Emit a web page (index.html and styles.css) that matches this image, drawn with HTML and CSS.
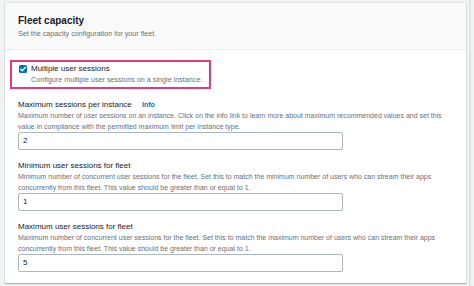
FILE: index.html
```html
<!DOCTYPE html>
<html lang="en">
<head>
<meta charset="utf-8">
<title>Fleet capacity</title>
<link rel="stylesheet" href="styles.css">
</head>
<body>
<div class="page">
  <section class="card">
    <header class="card-header">
      <h2 class="title">Fleet capacity</h2>
      <p class="subtitle">Set the capacity configuration for your fleet.</p>
    </header>
    <div class="card-body">
      <div class="highlight">
        <label class="check-row">
          <span class="checkbox">
            <svg viewBox="0 0 8 8" width="8" height="8"><path d="M1.6 4.1 L3.3 5.8 L6.4 2.3" fill="none" stroke="#fff" stroke-width="1.3" stroke-linecap="round" stroke-linejoin="round"/></svg>
          </span>
          <span class="check-label">Multiple user sessions</span>
        </label>
        <p class="check-desc">Configure multiple user sessions on a single instance.</p>
      </div>

      <div class="field">
        <div class="label">Maximum sessions per instance <span class="info">Info</span></div>
        <p class="desc">Maximum number of user sessions on an instance. Click on the info link to learn more about maximum recommended values and set this value in compliance with the permitted maximum limit per instance type.</p>
        <div class="input">2</div>
      </div>

      <div class="field">
        <div class="label">Minimum user sessions for fleet</div>
        <p class="desc">Minimum number of concurrent user sessions for the fleet. Set this to match the minimum number of users who can stream their apps concurrently from this fleet. This value should be greater than or equal to 1.</p>
        <div class="input">1</div>
      </div>

      <div class="field">
        <div class="label">Maximum user sessions for fleet</div>
        <p class="desc">Maximum number of concurrent user sessions for the fleet. Set this to match the maximum number of users who can stream their apps concurrently from this fleet. This value should be greater than or equal to 1.</p>
        <div class="input">5</div>
      </div>
    </div>
  </section>
  <div class="edge"></div>
</div>
</body>
</html>
```

FILE: styles.css
```css
* { box-sizing: border-box; }
html, body {
  margin: 0;
  padding: 0;
}
body {
  background: #f2f3f3;
  font-family: "Liberation Sans", Arial, sans-serif;
  color: #16191f;
}
.page {
  display: flex;
  align-items: flex-start;
  padding: 3px 0 0 5px;
  height: 286px;
}
.card {
  width: 461px;
  background: #fff;
  box-shadow: 0 1px 1px rgba(0, 28, 36, 0.25), 0 0 0 1px rgba(0, 28, 36, 0.06);
}
.edge {
  margin-left: 3px;
  width: 2px;
  align-self: stretch;
  margin-top: -3px;
  background: #e4e4e4;
}
.card-header {
  background: #fafafa;
  border-bottom: 1px solid #eaeded;
  padding: 11px 13px 10px;
}
.title {
  margin: 0;
  font-size: 10px;
  line-height: 14px;
  font-weight: 700;
  color: #16191f;
}
.subtitle {
  margin: 1px 0 0;
  font-size: 7.2px;
  line-height: 10px;
  color: #687078;
}
.card-body {
  padding: 10px 13px 11px;
}
.highlight {
  margin-left: -8px;
  width: 201px;
  border: 2px solid #e4397e;
  padding: 1px 0 2px 7px;
}
.check-row {
  display: flex;
  align-items: center;
  gap: 4px;
  height: 12px;
}
.checkbox {
  width: 8px;
  height: 8px;
  border-radius: 1.5px;
  background: #0073bb;
  display: flex;
}
.check-label {
  font-size: 8px;
  line-height: 12px;
}
.check-desc {
  margin: 0 0 0 12px;
  font-size: 7.2px;
  line-height: 10px;
  color: #687078;
}
.field {
  margin-top: 9.5px;
}
.field:first-of-type {
  margin-top: 7.5px;
}
.label {
  font-size: 8px;
  line-height: 11px;
}
.info {
  margin-left: 8px;
  font-size: 7px;
  font-weight: 700;
  color: #0073bb;
}
.desc {
  margin: 0;
  font-size: 7px;
  line-height: 11px;
  color: #687078;
  max-width: 430px;
}
.input {
  margin-top: 0.5px;
  width: 325px;
  height: 18px;
  border: 1px solid #aab7b8;
  border-radius: 2px;
  padding-left: 4px;
  font-size: 8px;
  line-height: 16px;
}
```
